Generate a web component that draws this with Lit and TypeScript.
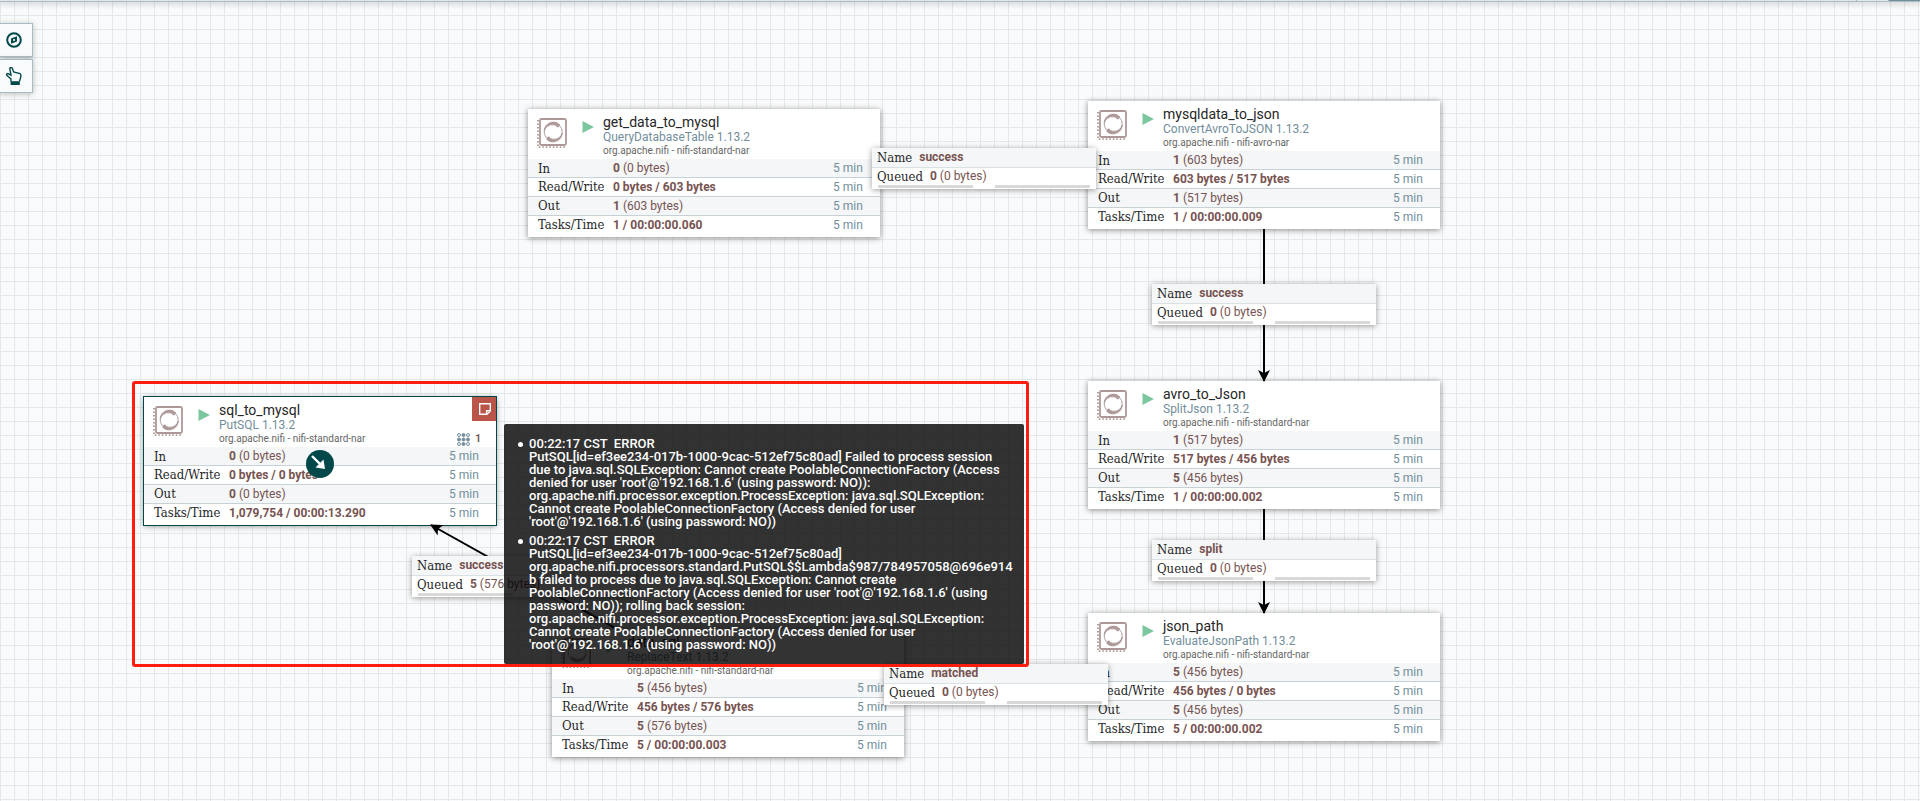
import { LitElement, html, css, svg } from "lit";
import { customElement, property } from "lit/decorators.js";

interface Stat {
  label: string;
  count: string;
  size?: string;
}

interface Processor {
  x: number;
  y: number;
  name: string;
  type: string;
  bundle: string;
  stats: Stat[];
  selected?: boolean;
  bulletin?: boolean;
  threads?: string;
}

interface Connection {
  x: number;
  y: number;
  name: string;
  count: string;
  size: string;
}

const stats = (i: [string, string], rw: string, o: [string, string], t: string): Stat[] => [
  { label: "In", count: i[0], size: i[1] },
  { label: "Read/Write", count: rw },
  { label: "Out", count: o[0], size: o[1] },
  { label: "Tasks/Time", count: t },
];

const STANDARD = "org.apache.nifi - nifi-standard-nar";

const PROCESSORS: Processor[] = [
  { x: 528, y: 109, name: "get_data_to_mysql", type: "QueryDatabaseTable 1.13.2", bundle: STANDARD,
    stats: stats(["0", "(0 bytes)"], "0 bytes / 603 bytes", ["1", "(603 bytes)"], "1 / 00:00:00.060") },
  { x: 1088, y: 101, name: "mysqldata_to_json", type: "ConvertAvroToJSON 1.13.2", bundle: "org.apache.nifi - nifi-avro-nar",
    stats: stats(["1", "(603 bytes)"], "603 bytes / 517 bytes", ["1", "(517 bytes)"], "1 / 00:00:00.009") },
  { x: 1088, y: 381, name: "avro_to_Json", type: "SplitJson 1.13.2", bundle: STANDARD,
    stats: stats(["1", "(517 bytes)"], "517 bytes / 456 bytes", ["5", "(456 bytes)"], "1 / 00:00:00.002") },
  { x: 1088, y: 613, name: "json_path", type: "EvaluateJsonPath 1.13.2", bundle: STANDARD,
    stats: stats(["5", "(456 bytes)"], "456 bytes / 0 bytes", ["5", "(456 bytes)"], "5 / 00:00:00.002") },
  { x: 552, y: 629, name: "data_sql", type: "ReplaceText 1.13.2", bundle: STANDARD,
    stats: stats(["5", "(456 bytes)"], "456 bytes / 576 bytes", ["5", "(576 bytes)"], "5 / 00:00:00.003") },
  { x: 144, y: 397, name: "sql_to_mysql", type: "PutSQL 1.13.2", bundle: STANDARD, selected: true, bulletin: true, threads: "1",
    stats: stats(["0", "(0 bytes)"], "0 bytes / 0 bytes", ["0", "(0 bytes)"], "1,079,754 / 00:00:13.290") },
];

const CONNECTIONS: Connection[] = [
  { x: 872, y: 148, name: "success", count: "0", size: "(0 bytes)" },
  { x: 1152, y: 284, name: "success", count: "0", size: "(0 bytes)" },
  { x: 1152, y: 540, name: "split", count: "0", size: "(0 bytes)" },
  { x: 884, y: 664, name: "matched", count: "0", size: "(0 bytes)" },
  { x: 412, y: 556, name: "success", count: "5", size: "(576 bytes)" },
];

const BULLETINS = [
  "PutSQL[id=ef3ee234-017b-1000-9cac-512ef75c80ad] Failed to process session due to java.sql.SQLException: Cannot create PoolableConnectionFactory (Access denied for user 'root'@'192.168.1.6' (using password: NO)): org.apache.nifi.processor.exception.ProcessException: java.sql.SQLException: Cannot create PoolableConnectionFactory (Access denied for user 'root'@'192.168.1.6' (using password: NO))",
  "PutSQL[id=ef3ee234-017b-1000-9cac-512ef75c80ad] org.apache.nifi.processors.standard.PutSQL$$Lambda$987/784957058@696e914b failed to process due to java.sql.SQLException: Cannot create PoolableConnectionFactory (Access denied for user 'root'@'192.168.1.6' (using password: NO)); rolling back session: org.apache.nifi.processor.exception.ProcessException: java.sql.SQLException: Cannot create PoolableConnectionFactory (Access denied for user 'root'@'192.168.1.6' (using password: NO))",
];

@customElement("processor-card")
export class ProcessorCard extends LitElement {
  @property({ attribute: false }) data!: Processor;

  static styles = css`
    :host { display: block; width: 352px; }
    .card { position: relative; background: #fff; box-shadow: 0 1px 6px rgba(0, 0, 0, 0.45); padding-bottom: 2px; }
    .selected { outline: 1px solid #004849; }
    .head { display: flex; height: 50px; box-sizing: border-box; padding: 6px 15px 0 9px; }
    .kind { width: 32px; height: 32px; flex: none; margin-top: 2px; }
    .run { width: 12px; height: 12px; flex: none; margin: 6px 9px 0 13px; }
    .titles { flex: 1; display: flex; flex-direction: column; white-space: nowrap; }
    .name { font-size: 14px; line-height: 14px; color: #262626; font-weight: 400; margin: 0; }
    .type { font-size: 12px; line-height: 16px; color: #728e9b; }
    .bundle { font-size: 10px; line-height: 12px; color: #666; }
    .threads { align-self: flex-end; display: flex; align-items: center; gap: 5px; font-size: 10px; line-height: 16px; font-weight: 700; color: #775351; }
    .threads svg { width: 13px; height: 13px; }
    .note { position: absolute; top: 0; right: 0; width: 24px; height: 24px; border: 0; padding: 0 0 0 2px; background: #ba554a; display: grid; place-items: center; }
    .note svg { width: 12px; height: 12px; }
    table { width: 100%; border-collapse: collapse; table-layout: fixed; }
    tr { background: #f4f6f7; }
    tr:nth-child(even) { background: #fff; }
    tr + tr { box-shadow: 0 -1px 0 #c7d2d7; }
    th, td { height: 19px; line-height: 18px; padding: 0; vertical-align: top; white-space: nowrap; text-align: left; font-weight: 400; font-size: 12px; }
    tr:first-child > * { line-height: 19px; }
    th { width: 85px; box-sizing: border-box; padding-left: 10px; color: #262626; font-family: "Roboto Slab", "DejaVu Serif Condensed", "DejaVu Serif", serif; font-stretch: condensed; font-size: 13px; }
    .value { color: #775351; }
    .value b { font-weight: 700; }
    .span { width: 47px; color: #728e9b; }
  `;

  render() {
    const p = this.data;
    return html`
      <article class="card ${p.selected ? "selected" : ""}">
        <header class="head">
          <svg class="kind" viewBox="0 0 32 32" fill="none" stroke="#ad9897">
            <rect x="3" y="2" width="26" height="26" rx="1.5" stroke-width="1.8" />
            <path d="M1 3V30.2H29" stroke-width="1.8" stroke-dasharray="1.5 2" />
            <circle cx="16.2" cy="15" r="9" stroke-width="0.9" />
            <path d="M7.2 14A9.2 9.2 0 0 1 22.6 7.6L21.2 10.2A8.2 8.2 0 0 0 7.2 14Z M25.2 16A9.2 9.2 0 0 1 9.8 22.4L11.2 19.8A8.2 8.2 0 0 0 25.2 16Z" fill="#ad9897" stroke-width="0.9" />
          </svg>
          <svg class="run" viewBox="0 0 12 12"><path d="M0.5 0L12 6L0.5 12Z" fill="#7dc7a0" /></svg>
          <div class="titles">
            <h2 class="name">${p.name}</h2>
            <span class="type">${p.type}</span>
            <span class="bundle">${p.bundle}</span>
          </div>
          ${p.threads
            ? html`<span class="threads">
                <svg viewBox="0 0 13 13" fill="none" stroke="#728e9b">
                  ${[2, 6.5, 11].map((y) => [2, 6.5, 11].map((x) => svg`<circle cx=${x} cy=${y} r="1.5" fill=${x === 6.5 || y === 6.5 ? "#728e9b" : "none"} />`))}
                </svg>${p.threads}</span>`
            : null}
        </header>
        ${p.bulletin
          ? html`<button class="note" aria-label="Bulletins">
              <svg viewBox="0 0 12 12" fill="none" stroke="#fff" stroke-width="1.4"><path d="M0.7 0.7H11.3V8L8 11.3H0.7Z M11.3 7.6H7.6V11.3" /></svg>
            </button>`
          : null}
        <table>
          <tbody>
            ${p.stats.map((s) => html`<tr><th scope="row">${s.label}</th><td class="value"><b>${s.count}</b> ${s.size ?? ""}</td><td class="span">5 min</td></tr>`)}
          </tbody>
        </table>
      </article>
    `;
  }
}

@customElement("connection-label")
export class ConnectionLabel extends LitElement {
  @property({ attribute: false }) data!: Connection;

  static styles = css`
    :host { display: block; width: 224px; }
    .box { background: #fff; box-shadow: 0 1px 6px rgba(0, 0, 0, 0.4); color: #775351; font-size: 12px; }
    .row { display: flex; gap: 7px; padding: 0 5px; }
    .title { height: 19px; line-height: 19px; background: #f4f6f7; border-bottom: 1px solid #d9e1e4; }
    .queued { height: 17px; line-height: 17px; }
    .key { color: #262626; font-family: "Roboto Slab", "DejaVu Serif Condensed", "DejaVu Serif", serif; font-stretch: condensed; font-size: 13px; }
    b { font-weight: 700; }
    .gauges { display: flex; justify-content: space-between; padding: 0 6px 1px; }
    .gauge { width: 95px; height: 3px; background: #d8d8d8; }
  `;

  render() {
    const c = this.data;
    return html`
      <div class="box">
        <div class="row title"><span class="key">Name</span><b>${c.name}</b></div>
        <div class="row queued"><span class="key">Queued</span><span><b>${c.count}</b> ${c.size}</span></div>
        <div class="gauges"><span class="gauge"></span><span class="gauge"></span></div>
      </div>
    `;
  }
}

@customElement("app-root")
export class AppRoot extends LitElement {
  static styles = css`
    :host { display: block; font-family: Roboto, sans-serif; }
    .canvas {
      position: relative; height: 100vh; overflow: hidden; background-color: #f9fafb;
      background-image: linear-gradient(to right, #e3e8eb 1px, transparent 1px), linear-gradient(to bottom, #e3e8eb 1px, transparent 1px);
      background-size: 14px 14px; background-position: 0 1px;
    }
    .bar { position: relative; display: flex; justify-content: flex-end; height: 1px; background: #e3e8eb; border-bottom: 1px solid #aabbc3; box-shadow: 0 1px 6px rgba(0, 0, 0, 0.4); }
    .search, .menu { width: 31px; border-left: 1px solid #aabbc3; }
    .menu { background: #728e9b; }
    .tools { position: relative; width: max-content; display: flex; flex-direction: column; gap: 2px; padding-top: 21px; }
    .tool { width: 33px; height: 34px; box-sizing: border-box; border: 1px solid #aabbc3; border-left: 0; padding: 0 0 0 5px; background: #f9fafb; box-shadow: 0 1px 6px rgba(0, 0, 0, 0.25); display: flex; align-items: center; }
    .tool svg { width: 18px; height: 18px; }
    .links { position: absolute; top: 0; left: 0; width: 100%; height: 100%; }
    .node { position: absolute; }
    .drag { position: absolute; left: 306px; top: 450px; width: 28px; height: 28px; }
    .tip { position: absolute; left: 504px; top: 424px; width: 520px; box-sizing: border-box; padding: 13px 10px 13px 14px; border-radius: 2px; background: rgba(0, 0, 0, 0.8); color: #fff; font-size: 13px; line-height: 13px; font-weight: 500; }
    .tip ul { margin: 0; padding: 0; list-style: none; display: flex; flex-direction: column; gap: 6px; }
    .tip li { display: flex; gap: 6px; }
    .tip li::before { content: ""; flex: none; width: 5px; height: 5px; margin-top: 5px; border-radius: 50%; background: #fff; }
    .message { min-width: 0; overflow-wrap: anywhere; }
    .mark { position: absolute; left: 132px; top: 381px; width: 897px; height: 286px; box-sizing: border-box; border: 3px solid #ff1e0e; border-radius: 3px; pointer-events: none; }
  `;

  render() {
    return html`
      <main class="canvas">
        <svg class="links" stroke="#000" stroke-width="2">
          <path d="M880 173L1088 165M1088 677L904 693" />
          <path d="M1264 229V372" />
          <path d="M1264 509V604" />
        </svg>
        ${PROCESSORS.map((p) => html`<processor-card class="node" style="left:${p.x}px;top:${p.y}px" .data=${p}></processor-card>`)}
        <svg class="links" stroke="#000" stroke-width="2">
          <defs>
            <marker id="head" viewBox="0 0 12 12" refX="11" refY="6" markerWidth="12" markerHeight="12" markerUnits="userSpaceOnUse" orient="auto">
              <path d="M0 0L12 6L0 12L3 6Z" stroke="none" />
            </marker>
          </defs>
          <path d="M1264 372V381" marker-end="url(#head)" />
          <path d="M1264 604V613" marker-end="url(#head)" />
          <path d="M615 628L431 525" marker-end="url(#head)" />
        </svg>
        ${CONNECTIONS.map((c) => html`<connection-label class="node" style="left:${c.x}px;top:${c.y}px" .data=${c}></connection-label>`)}
        <svg class="drag" viewBox="0 0 28 28">
          <circle cx="14" cy="14" r="14" fill="#004849" />
          <path d="M6 6L15 15" stroke="#fff" stroke-width="2.4" />
          <path d="M19 19L9.5 17.5L17.5 9.5Z" fill="#fff" />
        </svg>
        <header class="bar"><span class="search"></span><span class="menu"></span></header>
        <nav class="tools">
          <button class="tool" aria-label="Navigate">
            <svg viewBox="0 0 18 18" fill="none" stroke="#004849"><circle cx="9" cy="9" r="6.8" stroke-width="2" /><path d="M12 5.2V10.4L6 12.8V7.6Z" fill="#004849" stroke="none" /><circle cx="9" cy="9" r="1.1" fill="#f9fafb" stroke="none" /></svg>
          </button>
          <button class="tool" aria-label="Operate">
            <svg viewBox="0 0 18 18" fill="none" stroke="#004849"><path d="M6 14.5V12L1.8 8.2C1.2 7 2.4 6.2 3.6 6.8L6 8.2L4.8 1.6C5 0.2 7 0.2 7.4 1.4L8.6 5L15 6.6C16.2 7.2 16 9 15.6 10.6L14.4 14.5" stroke-width="1.4" /><path d="M5.6 14.2H14.8V18H5.6Z" fill="#004849" stroke="none" /></svg>
          </button>
        </nav>
        <aside class="tip" role="tooltip">
          <ul>${BULLETINS.map((b) => html`<li><div class="message">00:22:17 CST &nbsp;ERROR<br />${b}</div></li>`)}</ul>
        </aside>
        <div class="mark"></div>
      </main>
    `;
  }
}
